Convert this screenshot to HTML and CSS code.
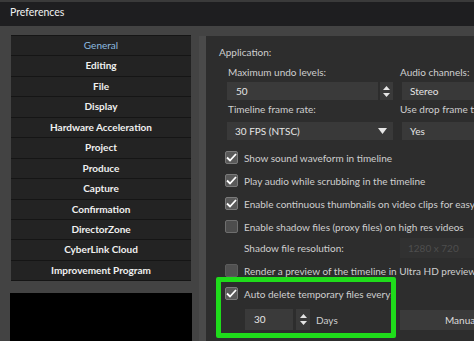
FILE: index.html
```html
<!DOCTYPE html>
<html lang="en">
<head>
  <meta charset="UTF-8">
  <meta name="viewport" content="width=device-width, initial-scale=1.0">
  <title>Preferences</title>
  <link rel="stylesheet" href="styles.css">
</head>
<body>
  <header class="titlebar">Preferences</header>

  <div class="main">
    <div class="sidebar">
      <ul class="nav">
        <li class="active">General</li>
        <li>Editing</li>
        <li>File</li>
        <li>Display</li>
        <li>Hardware Acceleration</li>
        <li>Project</li>
        <li>Produce</li>
        <li>Capture</li>
        <li>Confirmation</li>
        <li>DirectorZone</li>
        <li>CyberLink Cloud</li>
        <li>Improvement Program</li>
      </ul>
      <div class="preview"></div>
    </div>

    <div class="panel">
      <div class="section-title">Application:</div>

      <div class="fields">
        <div class="col col-left">
          <div class="label">Maximum undo levels:</div>
          <div class="spin">
            <div class="input input-wide">50</div>
            <div class="arrows">
              <svg width="7" height="4" viewBox="0 0 7 4"><path d="M0 4 L3.5 0 L7 4 Z" fill="#e6e6e6"/></svg>
              <svg width="7" height="4" viewBox="0 0 7 4"><path d="M0 0 L3.5 4 L7 0 Z" fill="#e6e6e6"/></svg>
            </div>
          </div>
          <div class="label label-second">Timeline frame rate:</div>
          <div class="select select-second">
            <span>30 FPS (NTSC)</span>
            <svg class="caret" width="9" height="6" viewBox="0 0 9 6"><path d="M0 0 L9 0 L4.5 6 Z" fill="#e6e6e6"/></svg>
          </div>
        </div>
        <div class="col col-right">
          <div class="label">Audio channels:</div>
          <div class="select"><span>Stereo</span></div>
          <div class="label label-second">Use drop frame timecode:</div>
          <div class="select select-second"><span>Yes</span></div>
        </div>
      </div>

      <div class="check-row">
        <span class="checkbox checked"><svg width="11" height="9" viewBox="0 0 11 9"><path d="M1 4.5 L4 7.5 L10 1" fill="none" stroke="#fff" stroke-width="1.8"/></svg></span>
        Show sound waveform in timeline
      </div>
      <div class="check-row">
        <span class="checkbox checked"><svg width="11" height="9" viewBox="0 0 11 9"><path d="M1 4.5 L4 7.5 L10 1" fill="none" stroke="#fff" stroke-width="1.8"/></svg></span>
        Play audio while scrubbing in the timeline
      </div>
      <div class="check-row">
        <span class="checkbox checked"><svg width="11" height="9" viewBox="0 0 11 9"><path d="M1 4.5 L4 7.5 L10 1" fill="none" stroke="#fff" stroke-width="1.8"/></svg></span>
        Enable continuous thumbnails on video clips for easy editing
      </div>
      <div class="check-row">
        <span class="checkbox"></span>
        Enable shadow files (proxy files) on high res videos
      </div>
      <div class="shadow-row">
        <span class="shadow-label">Shadow file resolution:</span>
        <span class="disabled-field">1280 x 720</span>
      </div>
      <div class="check-row render-row">
        <span class="checkbox dim"></span>
        Render a preview of the timeline in Ultra HD preview quality
      </div>
      <div class="check-row">
        <span class="checkbox checked"><svg width="11" height="9" viewBox="0 0 11 9"><path d="M1 4.5 L4 7.5 L10 1" fill="none" stroke="#fff" stroke-width="1.8"/></svg></span>
        Auto delete temporary files every:
      </div>
      <div class="days-row">
        <div class="spin">
          <div class="input input-days">30</div>
          <div class="arrows arrows-days">
            <svg width="7" height="4" viewBox="0 0 7 4"><path d="M0 4 L3.5 0 L7 4 Z" fill="#e6e6e6"/></svg>
            <svg width="7" height="4" viewBox="0 0 7 4"><path d="M0 0 L3.5 4 L7 0 Z" fill="#e6e6e6"/></svg>
          </div>
        </div>
        <span class="days">Days</span>
        <div class="button">Manual Clean</div>
      </div>

      <div class="highlight"></div>
    </div>
  </div>
</body>
</html>
```

FILE: styles.css
```css
body {
  margin: 0;
  padding: 0;
  width: 474px;
  height: 341px;
  overflow: hidden;
  background-color: #434343;
  font-family: Lato, "Open Sans", sans-serif;
  font-size: 10px;
  color: #cfcfcf;
}

.titlebar {
  height: 24px;
  line-height: 20px;
  border-top: 2px solid #3a3a3a;
  background-color: #1e1e20;
  color: #f2f2f2;
  padding-left: 10px;
  font-size: 10.5px;
}

.main {
  display: flex;
  padding-top: 9px;
}

.sidebar {
  width: 180px;
  margin-left: 11px;
  flex-shrink: 0;
}

.nav {
  list-style: none;
  margin: 0;
  padding: 0;
  border-top: 1px solid #151515;
}

.nav li {
  height: 19.45px;
  line-height: 19px;
  border-bottom: 1px solid #151515;
  background-color: #232323;
  text-align: center;
  color: #f0f0f0;
  font-size: 10px;
  font-weight: 700;
}

.nav li.active {
  color: #8cbbe0;
  font-weight: 400;
}

.preview {
  margin-top: 12px;
  margin-left: -1px;
  width: 182px;
  height: 60px;
  background-color: #000;
}

.panel {
  position: relative;
  margin-left: 8px;
  margin-top: 1px;
  width: 300px;
  height: 320px;
  border-left: 7px solid #4a4a4a;
  background-color: #2d2d2d;
  padding-left: 13px;
  white-space: nowrap;
}

.section-title {
  margin-top: 9px;
  line-height: 14px;
}

.fields {
  display: flex;
  gap: 7px;
  margin-top: 6px;
  margin-left: 8px;
}

.col-left {
  width: 166px;
  flex-shrink: 0;
}

.col-right {
  width: 160px;
  flex-shrink: 0;
}

.label {
  line-height: 14px;
  padding-left: 1px;
}

.col-right .label {
  padding-left: 0;
}

.label-second {
  margin-top: 2px;
}

.spin {
  display: flex;
  gap: 2px;
  margin-top: 3px;
}

.input {
  height: 18px;
  line-height: 18px;
  background-color: #3a3a3a;
  color: #e6e6e6;
  padding-left: 9px;
  box-sizing: border-box;
}

.input-wide {
  width: 151px;
}

.arrows {
  width: 13px;
  height: 18px;
  background-color: #3a3a3a;
  display: flex;
  flex-direction: column;
  justify-content: center;
  align-items: center;
  gap: 3px;
}

.select {
  height: 18px;
  line-height: 18px;
  margin-top: 3px;
  background-color: #393939;
  color: #e6e6e6;
  padding-left: 8px;
  display: flex;
  justify-content: space-between;
  align-items: center;
}

.col-left .select {
  padding-left: 8px;
  padding-right: 6px;
}

.col-right .select {
  margin-left: 2px;
}

.select-second {
  margin-top: 6px;
}

.caret {
  display: block;
}

.check-row {
  display: flex;
  align-items: center;
  gap: 6px;
  height: 23px;
  margin-left: 6px;
}

.fields + .check-row {
  margin-top: 6px;
}

.checkbox {
  flex-shrink: 0;
  width: 13px;
  height: 13px;
  box-sizing: border-box;
  border: 1px solid #6e6e6e;
  border-radius: 2px;
  background-color: #4d4d4d;
  display: flex;
  align-items: center;
  justify-content: center;
}

.checkbox.checked {
  background-color: #595959;
  border-color: #7a7a7a;
}

.checkbox.dim {
  background-color: #505050;
  border-color: #5c5c5c;
}

.shadow-row {
  display: flex;
  align-items: center;
  height: 20px;
  margin-left: 25px;
}

.shadow-label {
  width: 156px;
  flex-shrink: 0;
}

.disabled-field {
  flex-shrink: 0;
  width: 90px;
  height: 20px;
  line-height: 20px;
  background-color: #313131;
  color: #4e4e4e;
  padding-left: 8px;
}

.render-row {
  margin-top: 1px;
}

.days-row {
  display: flex;
  align-items: center;
  margin-top: 4px;
  margin-left: 26px;
}

.days-row .spin {
  margin-top: 0;
  gap: 3px;
}

.input-days {
  width: 48px;
  height: 21px;
  line-height: 21px;
  padding-left: 9px;
}

.arrows-days {
  width: 14px;
  height: 21px;
}

.days {
  margin-left: 6px;
  width: 84px;
  flex-shrink: 0;
}

.button {
  flex-shrink: 0;
  width: 150px;
  height: 20px;
  line-height: 20px;
  background-color: #3a3a3a;
  color: #dcdcdc;
  text-align: center;
}

.highlight {
  position: absolute;
  left: 10px;
  top: 241px;
  width: 180px;
  height: 61px;
  box-sizing: border-box;
  border: 5px solid #1fdc1b;
  border-radius: 2px;
}
```
